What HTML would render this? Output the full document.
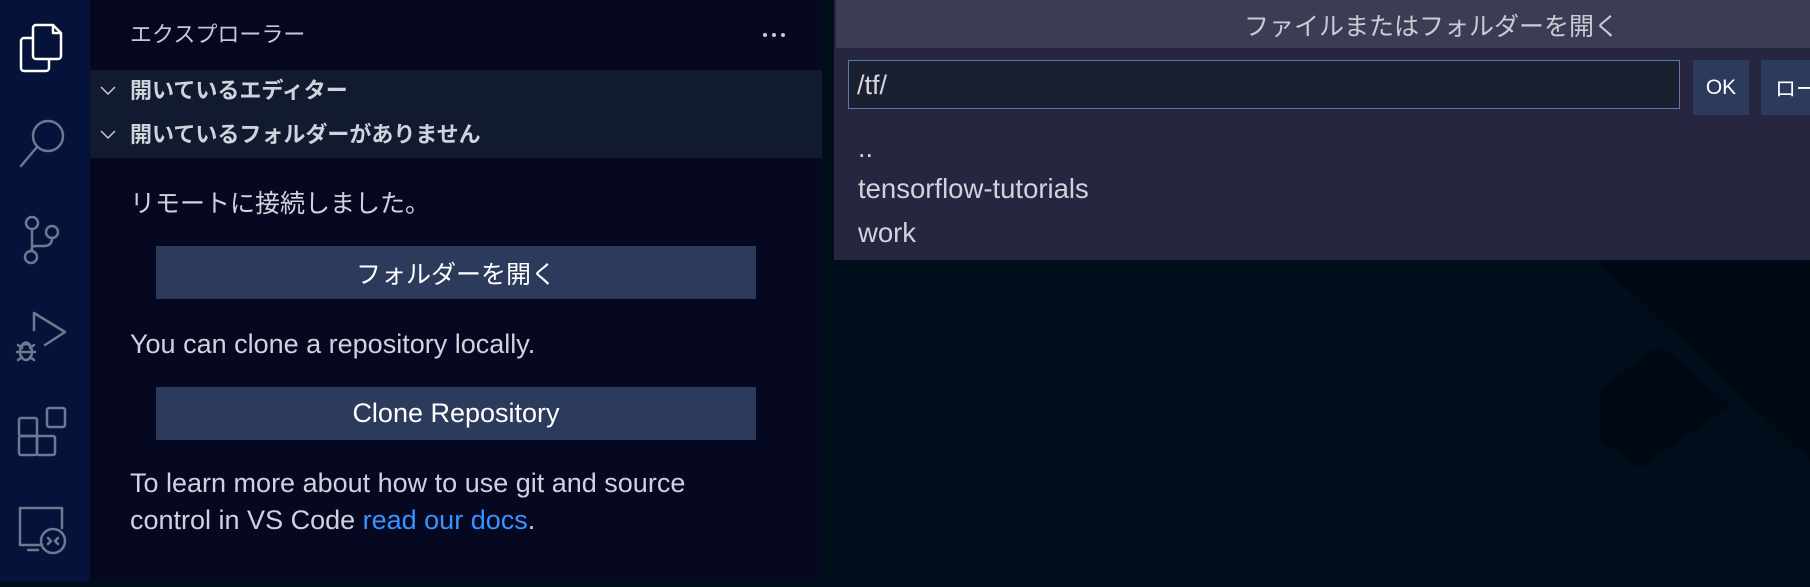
<!DOCTYPE html>
<html><head><meta charset="utf-8">
<style>
*{margin:0;padding:0;box-sizing:border-box}
body{width:1810px;height:582px;overflow:hidden;background:#000d1a;font-family:"Liberation Sans","Noto Sans CJK JP",sans-serif;position:relative}
.abs{position:absolute}
#act{left:0;top:0;width:90px;height:582px;background:#05133a}
#side{left:90px;top:0;width:732px;height:582px;background:#060822}
.t{position:absolute;white-space:nowrap;color:#cfd3dc;line-height:40px}
.btn{position:absolute;background:#2c3b5c;color:#fff;font-size:25px;display:flex;align-items:center;justify-content:center}
</style></head><body>
<svg class="abs" style="left:0;top:0" width="1810" height="582">
<polygon points="1600,263 1810,263 1810,460" fill="#000912"/>
<polygon points="1660,345 1730,405 1640,468 1600,440 1600,390" fill="#000812"/>
</svg>
<div id="act" class="abs">
<svg width="90" height="582" fill="none" stroke-width="2.5" stroke-linejoin="round" stroke-linecap="round">
 <g stroke="#fff">
  <path d="M33 38 H24 a3 3 0 0 0 -3 3 V68 a3 3 0 0 0 3 3 H46 a3 3 0 0 0 3 -3 V60"/>
  <path d="M36 25 H53 L61 33 V56 a3 3 0 0 1 -3 3 H36 a3 3 0 0 1 -3 -3 V28 a3 3 0 0 1 3 -3 Z M53 25 V33 H61"/>
 </g>
 <g stroke="#6f7890">
  <circle cx="48" cy="136" r="15"/><path d="M37 147 L21 166"/>
  <circle cx="32" cy="223" r="6"/><circle cx="52" cy="232" r="6"/><circle cx="31" cy="257" r="6"/>
  <path d="M32 229 V251 M52 238 q0 8 -8 8 H35 q-3 0 -4 5"/>
  <path d="M34 313 L65 332 L45 345 M34 313 V330"/>
  <ellipse cx="26" cy="352" rx="6" ry="8"/><path d="M18 345 l4 3 M34 345 l-4 3 M17 352 H35 M18 360 l4 -3 M34 360 l-4 -3 M22 345 q4 -5 8 0"/>
  <rect x="19" y="418" width="18" height="18" rx="2"/><rect x="19" y="436" width="18" height="19" rx="2"/><rect x="37" y="436" width="18" height="19" rx="2"/>
  <rect x="47" y="408" width="18" height="19" rx="2"/>
  <path d="M42 545 H20 V508 H62 V528 M28 550 H38"/>
  <circle cx="53" cy="541" r="12"/><path d="M48 544 l3 -3 -3 -3 M58 538 l-3 3 3 3"/>
 </g>
</svg>
</div>
<div id="side" class="abs">
 <div class="t" style="left:40px;top:15px;font-size:22px;color:#c6cad4">エクスプローラー</div>
 <svg class="abs" style="left:672px;top:31px" width="26" height="8" fill="#c6cad4"><circle cx="3" cy="4" r="2"/><circle cx="12" cy="4" r="2"/><circle cx="21" cy="4" r="2"/></svg>
 <div class="abs" style="left:0;top:70px;width:732px;height:88px;background:#111a2e"></div>
 <svg class="abs" style="left:10px;top:84px" width="16" height="60" fill="none" stroke="#c6cad4" stroke-width="1.5"><path d="M1 3 L8 10 L15 3 M1 47 L8 54 L15 47"/></svg>
 <div class="t" style="left:40px;top:71px;font-size:22px;font-weight:bold">開いているエディター</div>
 <div class="t" style="left:40px;top:115px;font-size:22px;font-weight:bold">開いているフォルダーがありません</div>
 <div class="t" style="left:40px;top:184px;font-size:25px">リモートに接続しました。</div>
 <div class="btn" style="left:66px;top:246px;width:600px;height:53px">フォルダーを開く</div>
 <div class="t" style="left:40px;top:324px;font-size:27px">You can clone a repository locally.</div>
 <div class="btn" style="left:66px;top:387px;width:600px;height:53px;font-size:27px">Clone Repository</div>
 <div class="t" style="left:40px;top:465px;font-size:27px;line-height:37px;white-space:normal;width:610px">To learn more about how to use git and source control in VS Code <span style="color:#3794ff">read our docs</span>.</div>
</div>
<div class="abs" style="left:834px;top:0;width:976px;height:260px;background:#262640">
 <div class="abs" style="left:2px;top:0;width:974px;height:48px;background:#3c3c55"></div>
 <div class="t" style="left:410px;top:7px;font-size:25px;color:#c9ccd4">ファイルまたはフォルダーを開く</div>
 <div class="abs" style="left:14px;top:60px;width:832px;height:49px;background:#1b2030;border:1.5px solid #5a78ab"></div>
 <div class="t" style="left:23px;top:65px;font-size:27px;color:#d4d6dc">/tf/</div>
 <div class="btn" style="left:859px;top:60px;width:56px;height:55px;font-size:21px">OK</div>
 <div class="btn" style="left:927px;top:60px;width:60px;height:55px;font-size:21px;justify-content:flex-start;padding-left:14px">ロー</div>
 <div class="t" style="left:24px;top:128px;font-size:27px">..</div>
 <div class="t" style="left:24px;top:169px;font-size:27.5px">tensorflow-tutorials</div>
 <div class="t" style="left:24px;top:213px;font-size:27.5px">work</div>
</div>
</body></html>
